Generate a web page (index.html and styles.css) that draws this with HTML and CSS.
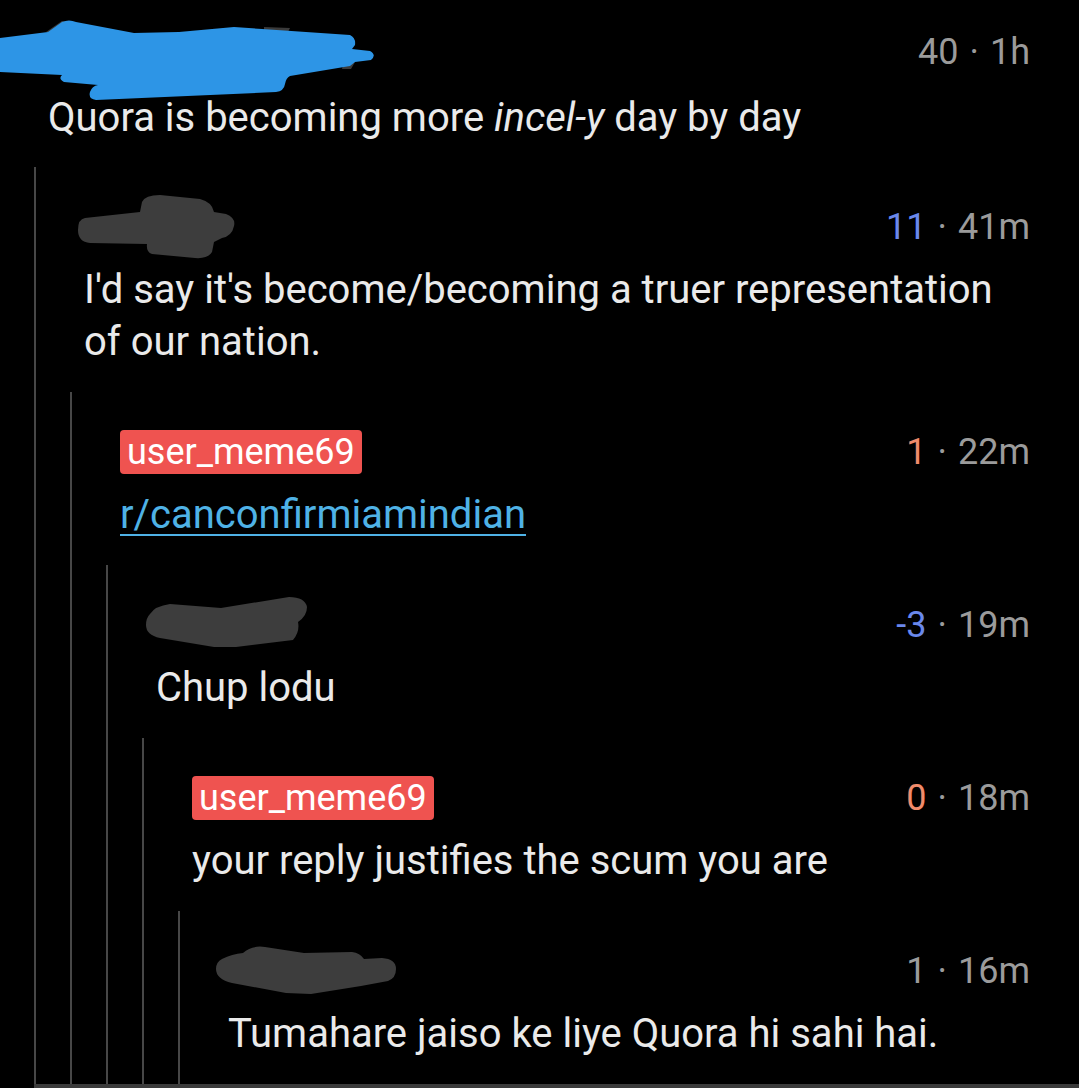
FILE: index.html
```html
<!DOCTYPE html>
<html lang="en">
  <head>
    <meta charset="UTF-8" />
    <meta name="viewport" content="width=device-width, initial-scale=1.0" />
    <title>Comment thread</title>
    <link rel="stylesheet" href="styles.css">
  </head>
  <body>
    <div class="thread">
      <!-- top level comment -->
      <div class="comment top">
        <div class="comment-main">
          <div class="comment-head">
            <svg class="scribble scribble-0" width="380" height="100" viewBox="0 2 380 100">
              <path fill="#3a3a3a" d="M46,32 L62,21 L74,23 L72,32 Z M264,27 L290,28 L288,32 L264,32 Z M344,62 L355,62 L351,69 L342,69 Z" />
              <path fill="#2d95e6" d="M0,38 L48,32 L62,22 Q69,19 76,22 L134,33 L179,32 L234,27 L262,29 L350,35 Q356,38 355,45 L352,49 L370,51 Q377,55 371,60 L355,62 L350,66 L290,76 Q286,78 285,84 Q284,91 276,92 L96,100 Q88,99 90,92 Q92,86 98,85 L64,82 Q58,79 62,75 L0,72 Z" />
            </svg>
            <span class="meta"><span class="score">40</span><span class="dot">·</span><span>1h</span></span>
          </div>
          <p class="comment-body">Quora is becoming more <em>incel-y</em> day by day</p>
        </div>
      </div>

      <div class="comment">
        <span class="guide"></span>
        <div class="comment-main">
          <div class="comment-head">
            <svg class="scribble scribble-1" width="180" height="80" viewBox="70 187 180 80">
              <path fill="#3d3d3d" d="M85,218 L140,212 L142,202 Q145,195 160,195 L200,199 Q212,202 214,212 L226,214 Q236,218 234,226 Q232,236 222,238 L214,242 L212,252 Q208,259 195,258 L152,254 Q146,252 147,244 L90,243 Q78,242 78,230 Q78,219 85,218 Z" />
            </svg>
            <span class="meta"><span class="score up">11</span><span class="dot">·</span><span>41m</span></span>
          </div>
          <p class="comment-body">I'd say it's become/becoming a truer representation of our nation.</p>
        </div>
      </div>

      <div class="comment">
        <span class="guide"></span>
        <span class="guide"></span>
        <div class="comment-main">
          <div class="comment-head">
            <span class="tag">user_meme69</span>
            <span class="meta"><span class="score hot">1</span><span class="dot">·</span><span>22m</span></span>
          </div>
          <p class="comment-body"><a class="sub-link" href="#">r/canconfirmiamindian</a></p>
        </div>
      </div>

      <div class="comment">
        <span class="guide"></span>
        <span class="guide"></span>
        <span class="guide"></span>
        <div class="comment-main">
          <div class="comment-head">
            <svg class="scribble scribble-3" width="180" height="80" viewBox="140 585 180 80">
              <path fill="#3d3d3d" d="M150,614 Q155,606 170,604 L221,608 L289,597 Q305,597 307,607 Q307,616 298,622 Q300,632 293,640 L236,647 L214,647 L160,638 Q146,635 146,625 Q146,618 150,614 Z" />
            </svg>
            <span class="meta"><span class="score up">-3</span><span class="dot">·</span><span>19m</span></span>
          </div>
          <p class="comment-body">Chup lodu</p>
        </div>
      </div>

      <div class="comment">
        <span class="guide"></span>
        <span class="guide"></span>
        <span class="guide"></span>
        <span class="guide"></span>
        <div class="comment-main">
          <div class="comment-head">
            <span class="tag">user_meme69</span>
            <span class="meta"><span class="score hot">0</span><span class="dot">·</span><span>18m</span></span>
          </div>
          <p class="comment-body">your reply justifies the scum you are</p>
        </div>
      </div>

      <div class="comment">
        <span class="guide"></span>
        <span class="guide"></span>
        <span class="guide"></span>
        <span class="guide"></span>
        <span class="guide"></span>
        <div class="comment-main">
          <div class="comment-head">
            <svg class="scribble scribble-5" width="200" height="80" viewBox="210 930 200 80">
              <path fill="#3d3d3d" d="M222,958 Q232,953 243,952 Q252,944 265,946 L304,952 L352,951 Q360,952 364,958 L382,957 Q396,958 396,968 Q396,977 388,980 L361,985 L311,993 L286,992 L232,982 Q216,978 216,968 Q216,961 222,958 Z" />
            </svg>
            <span class="meta"><span class="score">1</span><span class="dot">·</span><span>16m</span></span>
          </div>
          <p class="comment-body">Tumahare jaiso ke liye Quora hi sahi hai.</p>
        </div>
      </div>

      <div class="thread-end"></div>
    </div>
  </body>
</html>
```

FILE: styles.css
```css
body {
  margin: 0;
  background-color: #000;
  font-family: Roboto, "Noto Sans", sans-serif;
  color: #eaeaea;
}

.comment {
  display: flex;
  padding-left: 34px;
}

.guide {
  flex: none;
  width: 36px;
  border-left: 2px solid #474747;
  box-sizing: border-box;
}

.comment-main {
  flex: 1;
  min-width: 0;
  padding: 38px 49px 24px 14px;
}

.comment.top .comment-main {
  padding-top: 30px;
  padding-bottom: 23px;
}

.comment.top .comment-body {
  margin-top: 18px;
}

.comment-head {
  display: flex;
  justify-content: space-between;
  align-items: center;
  height: 44px;
}

.comment-body {
  margin: 15px 0 0;
  font-size: 40px;
  line-height: 52px;
  color: #eaeaea;
}

.meta {
  font-size: 36px;
  color: #9b9b9b;
  white-space: nowrap;
}

.dot {
  margin: 0 11px;
}

.score.up {
  color: #6a88ec;
}

.score.hot {
  color: #f08b6b;
}

.scribble {
  display: block;
  flex: none;
}

.scribble-0 {
  margin-left: -48px;
}

.scribble-1 {
  margin-left: -14px;
}

.scribble-3 {
  margin-left: -16px;
}

.scribble-5 {
  margin-left: -18px;
}

.tag {
  background-color: #ef5350;
  color: #fff;
  border-radius: 4px;
  padding: 0 7px;
  font-size: 36px;
  line-height: 44px;
}

.sub-link {
  color: #4fb2e6;
  text-decoration: underline;
  text-decoration-thickness: 2px;
  text-underline-offset: 6px;
}

.thread-end {
  height: 4px;
  margin-left: 34px;
  background-color: #3b3b3b;
}
```
